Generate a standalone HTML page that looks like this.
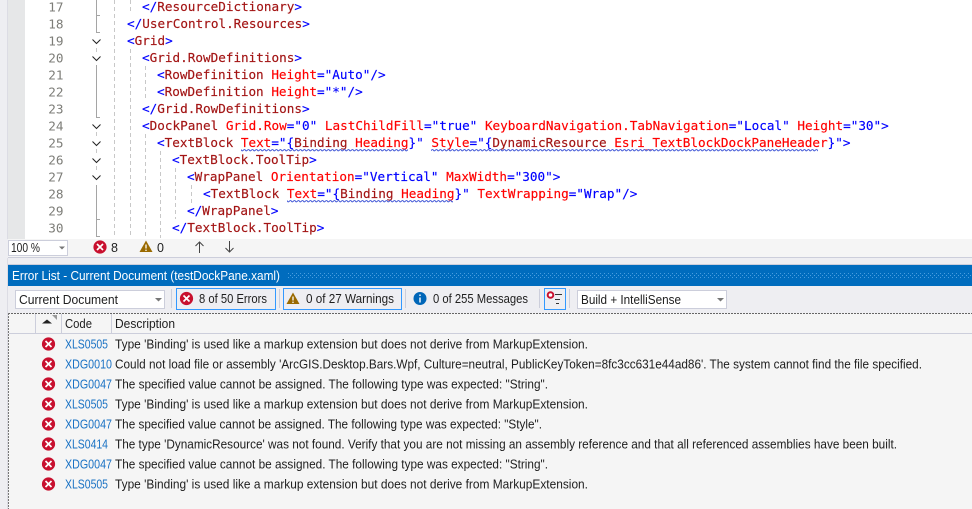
<!DOCTYPE html>
<html><head><meta charset="utf-8"><title>Error List</title>
<style>
html,body{margin:0;padding:0;width:972px;height:509px;overflow:hidden;background:#f5f5f5}
svg{display:block}
.c{font-family:"DejaVu Sans Mono","Liberation Mono",monospace;font-size:12.66px;white-space:pre}
.u{font-family:"Liberation Sans",sans-serif;font-size:12.5px;fill:#1e1e1e}
.n{fill:#7d7d78;text-anchor:end}
.b{fill:#0000ff;stroke:#0000ff;stroke-width:.15px}
.m{fill:#a31515;stroke:#a31515;stroke-width:.15px}
.r{fill:#ff0000;stroke:#ff0000;stroke-width:.15px}
.g{stroke:#c8c8c8;stroke-dasharray:4 3;stroke-width:1;fill:none}
.l{stroke:#a5a5a5;stroke-width:1;fill:none}
.v{stroke:#222;stroke-width:1;fill:none}
.k{fill:#1a72c4}
</style></head><body>
<svg width="972" height="509" viewBox="0 0 972 509" xmlns="http://www.w3.org/2000/svg">
<defs>
<pattern id="dots" x="0" y="273" width="4" height="6" patternUnits="userSpaceOnUse">
<rect x="0" y="0" width="1" height="1" fill="#4a9edf"/><rect x="2" y="2" width="1" height="1" fill="#4a9edf"/><rect x="0" y="4" width="1" height="1" fill="#4a9edf"/>
</pattern>
<pattern id="sq1" x="241" y="149" width="4" height="3" patternUnits="userSpaceOnUse">
<path d="M0 .5Q1 2.500 2 1.500T4 .5" fill="none" stroke="#4a5fd8" stroke-width="1"/>
</pattern>
<pattern id="sq2" x="287" y="200" width="4" height="3" patternUnits="userSpaceOnUse">
<path d="M0 .5Q1 2.500 2 1.500T4 .5" fill="none" stroke="#4a5fd8" stroke-width="1"/>
</pattern>
<g id="err"><circle r="6.6" fill="#c8102e"/><path d="M-3-3L3 3M3-3L-3 3" stroke="#fff" stroke-width="1.7"/></g>
<g id="warn"><path d="M0-6.5L6.5 5H-6.5Z" fill="#9a6a00"/><path d="M0-2.5V1.5M0 2.6V4" stroke="#fff" stroke-width="1.3"/></g>
</defs>

<!-- editor -->
<rect x="0" y="0" width="972" height="239" fill="#fff"/>
<rect x="0" y="0" width="8" height="239" fill="#eeeef2"/>
<rect x="7" y="0" width="1" height="239" fill="#dcdce4"/>
<rect x="8" y="0" width="17" height="239" fill="#e6e7e8"/>

<!-- outline -->
<path class="l" d="M96.5 0V15.5H100M96.5 15.5V32.500H100M96.500 65V117.500H100M96.500 185V219.500H100M96.500 219V236.500H100"/>
<path class="g" d="M96.500 48V52M96.500 132V136M96.500 149V153M96.500 166V170"/>
<path class="v" d="M92.500 39.500L96.500 43.500L100.500 39.500M92.500 56.500L96.500 60.500L100.500 56.500M92.500 124.500L96.500 128.500L100.500 124.500M92.500 141.500L96.500 145.500L100.500 141.500M92.500 158.500L96.500 162.500L100.500 158.500M92.500 175.500L96.500 179.500L100.500 175.500"/>

<!-- indent guides -->
<path class="g" d="M114.500 0V238M130.500 0V14M130.500 49V238M145.500 66V100M145.500 134V238M160.500 151V238M175.500 168V219M191.500 185V203"/>

<!-- line numbers -->
<g class="c n">
<text x="63.5" y="11.5">17</text><text x="63.5" y="28.5">18</text><text x="63.5" y="45.5">19</text><text x="63.5" y="62.5">20</text><text x="63.5" y="79.5">21</text><text x="63.5" y="96.5">22</text><text x="63.5" y="113.5">23</text><text x="63.5" y="130.5">24</text><text x="63.5" y="147.5">25</text><text x="63.5" y="164.5">26</text><text x="63.5" y="181.5">27</text><text x="63.5" y="198.5">28</text><text x="63.5" y="215.5">29</text><text x="63.5" y="232.5">30</text>
</g>

<!-- code -->
<g class="c">
<text x="142" y="11"><tspan class="b">&lt;/</tspan><tspan class="m">ResourceDictionary</tspan><tspan class="b">&gt;</tspan></text>
<text x="127" y="28"><tspan class="b">&lt;/</tspan><tspan class="m">UserControl.Resources</tspan><tspan class="b">&gt;</tspan></text>
<text x="127" y="45"><tspan class="b">&lt;</tspan><tspan class="m">Grid</tspan><tspan class="b">&gt;</tspan></text>
<text x="142" y="62"><tspan class="b">&lt;</tspan><tspan class="m">Grid.RowDefinitions</tspan><tspan class="b">&gt;</tspan></text>
<text x="157" y="79"><tspan class="b">&lt;</tspan><tspan class="m">RowDefinition </tspan><tspan class="r">Height</tspan><tspan class="b">="Auto"/&gt;</tspan></text>
<text x="157" y="96"><tspan class="b">&lt;</tspan><tspan class="m">RowDefinition </tspan><tspan class="r">Height</tspan><tspan class="b">="*"/&gt;</tspan></text>
<text x="142" y="113"><tspan class="b">&lt;/</tspan><tspan class="m">Grid.RowDefinitions</tspan><tspan class="b">&gt;</tspan></text>
<text x="142" y="130"><tspan class="b">&lt;</tspan><tspan class="m">DockPanel </tspan><tspan class="r">Grid.Row</tspan><tspan class="b">="0" </tspan><tspan class="r">LastChildFill</tspan><tspan class="b">="true" </tspan><tspan class="r">KeyboardNavigation.TabNavigation</tspan><tspan class="b">="Local" </tspan><tspan class="r">Height</tspan><tspan class="b">="30"&gt;</tspan></text>
<text x="157" y="147"><tspan class="b">&lt;</tspan><tspan class="m">TextBlock </tspan><tspan class="r">Text</tspan><tspan class="b">="{</tspan><tspan class="m">Binding </tspan><tspan class="r">Heading</tspan><tspan class="b">}" </tspan><tspan class="r">Style</tspan><tspan class="b">="{</tspan><tspan class="m">DynamicResource </tspan><tspan class="r">Esri_TextBlockDockPaneHeader</tspan><tspan class="b">}"&gt;</tspan></text>
<text x="172" y="164"><tspan class="b">&lt;</tspan><tspan class="m">TextBlock.ToolTip</tspan><tspan class="b">&gt;</tspan></text>
<text x="187" y="181"><tspan class="b">&lt;</tspan><tspan class="m">WrapPanel </tspan><tspan class="r">Orientation</tspan><tspan class="b">="Vertical" </tspan><tspan class="r">MaxWidth</tspan><tspan class="b">="300"&gt;</tspan></text>
<text x="203" y="198"><tspan class="b">&lt;</tspan><tspan class="m">TextBlock </tspan><tspan class="r">Text</tspan><tspan class="b">="{</tspan><tspan class="m">Binding </tspan><tspan class="r">Heading</tspan><tspan class="b">}" </tspan><tspan class="r">TextWrapping</tspan><tspan class="b">="Wrap"/&gt;</tspan></text>
<text x="187" y="215"><tspan class="b">&lt;/</tspan><tspan class="m">WrapPanel</tspan><tspan class="b">&gt;</tspan></text>
<text x="172" y="232"><tspan class="b">&lt;/</tspan><tspan class="m">TextBlock.ToolTip</tspan><tspan class="b">&gt;</tspan></text>
</g>

<!-- squiggles -->
<rect x="241" y="149" width="167" height="3" fill="url(#sq1)"/>
<rect x="431" y="149" width="387" height="3" fill="url(#sq1)"/>
<rect x="287" y="200" width="166" height="3" fill="url(#sq2)"/>

<!-- status bar -->
<rect x="0" y="239" width="972" height="18" fill="#f5f5f5"/>
<rect x="0" y="239" width="8" height="26" fill="#eeeef2"/>
<rect x="8.500" y="240.500" width="59" height="15" fill="#fff" stroke="#cccedb"/>
<text class="u" x="11" y="252" textLength="29" lengthAdjust="spacingAndGlyphs">100 %</text>
<path d="M59 246.500h6l-3 3z" fill="#777"/>
<use href="#err" x="100" y="247"/>
<text class="u" x="111" y="252">8</text>
<use href="#warn" x="146" y="247"/>
<text class="u" x="157" y="252">0</text>
<path d="M199.500 253V242M195.500 246L199.500 242L203.500 246M229.500 241V252M225.500 248L229.500 252L233.500 248" stroke="#444" stroke-width="1" fill="none"/>
<rect x="8" y="257" width="964" height="1" fill="#cccedb"/>
<rect x="8" y="258" width="964" height="7" fill="#eeeef2"/>
<rect x="8" y="264" width="964" height="1" fill="#cccedb"/>
<rect x="0" y="258" width="8" height="251" fill="#eeeef2"/>
<rect x="7" y="258" width="1" height="251" fill="#dcdce4"/>

<!-- title bar -->
<rect x="8" y="265" width="964" height="21" fill="#006cbe"/>
<rect x="288" y="273" width="684" height="5" fill="url(#dots)"/>
<text class="u" x="12" y="280" textLength="268" lengthAdjust="spacingAndGlyphs" style="fill:#fff">Error List - Current Document (testDockPane.xaml)</text>

<!-- toolbar -->
<rect x="8" y="286" width="964" height="27" fill="#eeeef2"/>
<rect x="15.500" y="290.500" width="149" height="18" fill="#fff" stroke="#cccedb"/>
<text class="u" x="19" y="304" textLength="99" lengthAdjust="spacingAndGlyphs">Current Document</text>
<path d="M155 298h7l-3.500 3.500z" fill="#777"/>
<rect x="171" y="289" width="1" height="19" fill="#cccedb"/>
<rect x="176.500" y="288.500" width="99" height="21" fill="#eeeef2" stroke="#3399ff"/>
<use href="#err" x="186.500" y="298.500"/>
<text class="u" x="199" y="303" textLength="68" lengthAdjust="spacingAndGlyphs">8 of 50 Errors</text>
<rect x="279" y="289" width="1" height="19" fill="#cccedb"/>
<rect x="283.500" y="288.500" width="118" height="21" fill="#eeeef2" stroke="#3399ff"/>
<use href="#warn" x="293" y="299"/>
<text class="u" x="306" y="303" textLength="88" lengthAdjust="spacingAndGlyphs">0 of 27 Warnings</text>
<rect x="405" y="289" width="1" height="19" fill="#cccedb"/>
<circle cx="420" cy="298.500" r="6.500" fill="#0066b8"/>
<path d="M420 297.500V302.500M420 294.500V296" stroke="#fff" stroke-width="1.400"/>
<text class="u" x="433" y="303" textLength="95" lengthAdjust="spacingAndGlyphs">0 of 255 Messages</text>
<rect x="539" y="289" width="1" height="19" fill="#cccedb"/>
<rect x="544.500" y="288.500" width="21" height="21" fill="#eeeef2" stroke="#3399ff"/>
<circle cx="550.500" cy="295" r="2.800" fill="#fff" stroke="#c8102e" stroke-width="2"/>
<path d="M555 294.500H562M555 299.500H560M556 303.500H559" stroke="#333" stroke-width="1"/>
<rect x="569" y="289" width="1" height="19" fill="#cccedb"/>
<rect x="577.500" y="290.500" width="149" height="18" fill="#fff" stroke="#cccedb"/>
<text class="u" x="581" y="304" textLength="100" lengthAdjust="spacingAndGlyphs">Build + IntelliSense</text>
<path d="M717 298h7l-3.500 3.500z" fill="#777"/>

<!-- list header -->
<path d="M8 313.500H972" stroke="#666" stroke-dasharray="2 1" fill="none"/>
<path d="M8.500 313V509" stroke="#777" stroke-dasharray="2 1" fill="none"/>
<rect x="9" y="314" width="963" height="195" fill="#f5f5f5"/>
<rect x="9" y="333" width="963" height="1" fill="#cccedb"/>
<path d="M35.500 314V333M61.500 314V333M111.500 314V333" stroke="#cccedb" fill="none"/>
<path d="M42 323.500L47 319.500L52 323.500Z" fill="#222"/>
<path d="M52 315h5v5z" fill="#999"/>
<text class="u" x="65" y="328" textLength="27" lengthAdjust="spacingAndGlyphs">Code</text>
<text class="u" x="115" y="328" textLength="60" lengthAdjust="spacingAndGlyphs">Description</text>

<!-- rows -->
<use href="#err" x="48.500" y="344"/><use href="#err" x="48.500" y="364"/><use href="#err" x="48.500" y="384"/><use href="#err" x="48.500" y="404"/><use href="#err" x="48.500" y="424"/><use href="#err" x="48.500" y="444"/><use href="#err" x="48.500" y="464"/><use href="#err" x="48.500" y="484"/>

<text class="u k" x="65" y="348.500" textLength="43" lengthAdjust="spacingAndGlyphs">XLS0505</text>
<text class="u" x="115" y="348.500" textLength="473" lengthAdjust="spacingAndGlyphs">Type 'Binding' is used like a markup extension but does not derive from MarkupExtension.</text>
<text class="u k" x="65" y="368.500" textLength="47" lengthAdjust="spacingAndGlyphs">XDG0010</text>
<text class="u" x="115" y="368.500" textLength="807" lengthAdjust="spacingAndGlyphs">Could not load file or assembly 'ArcGIS.Desktop.Bars.Wpf, Culture=neutral, PublicKeyToken=8fc3cc631e44ad86'. The system cannot find the file specified.</text>
<text class="u k" x="65" y="388.500" textLength="47" lengthAdjust="spacingAndGlyphs">XDG0047</text>
<text class="u" x="115" y="388.500" textLength="433" lengthAdjust="spacingAndGlyphs">The specified value cannot be assigned. The following type was expected: "String".</text>
<text class="u k" x="65" y="408.500" textLength="43" lengthAdjust="spacingAndGlyphs">XLS0505</text>
<text class="u" x="115" y="408.500" textLength="473" lengthAdjust="spacingAndGlyphs">Type 'Binding' is used like a markup extension but does not derive from MarkupExtension.</text>
<text class="u k" x="65" y="428.500" textLength="47" lengthAdjust="spacingAndGlyphs">XDG0047</text>
<text class="u" x="115" y="428.500" textLength="427" lengthAdjust="spacingAndGlyphs">The specified value cannot be assigned. The following type was expected: "Style".</text>
<text class="u k" x="65" y="448.500" textLength="43" lengthAdjust="spacingAndGlyphs">XLS0414</text>
<text class="u" x="115" y="448.500" textLength="782" lengthAdjust="spacingAndGlyphs">The type 'DynamicResource' was not found. Verify that you are not missing an assembly reference and that all referenced assemblies have been built.</text>
<text class="u k" x="65" y="468.500" textLength="47" lengthAdjust="spacingAndGlyphs">XDG0047</text>
<text class="u" x="115" y="468.500" textLength="433" lengthAdjust="spacingAndGlyphs">The specified value cannot be assigned. The following type was expected: "String".</text>
<text class="u k" x="65" y="488.500" textLength="43" lengthAdjust="spacingAndGlyphs">XLS0505</text>
<text class="u" x="115" y="488.500" textLength="473" lengthAdjust="spacingAndGlyphs">Type 'Binding' is used like a markup extension but does not derive from MarkupExtension.</text>
</svg>
</body></html>
